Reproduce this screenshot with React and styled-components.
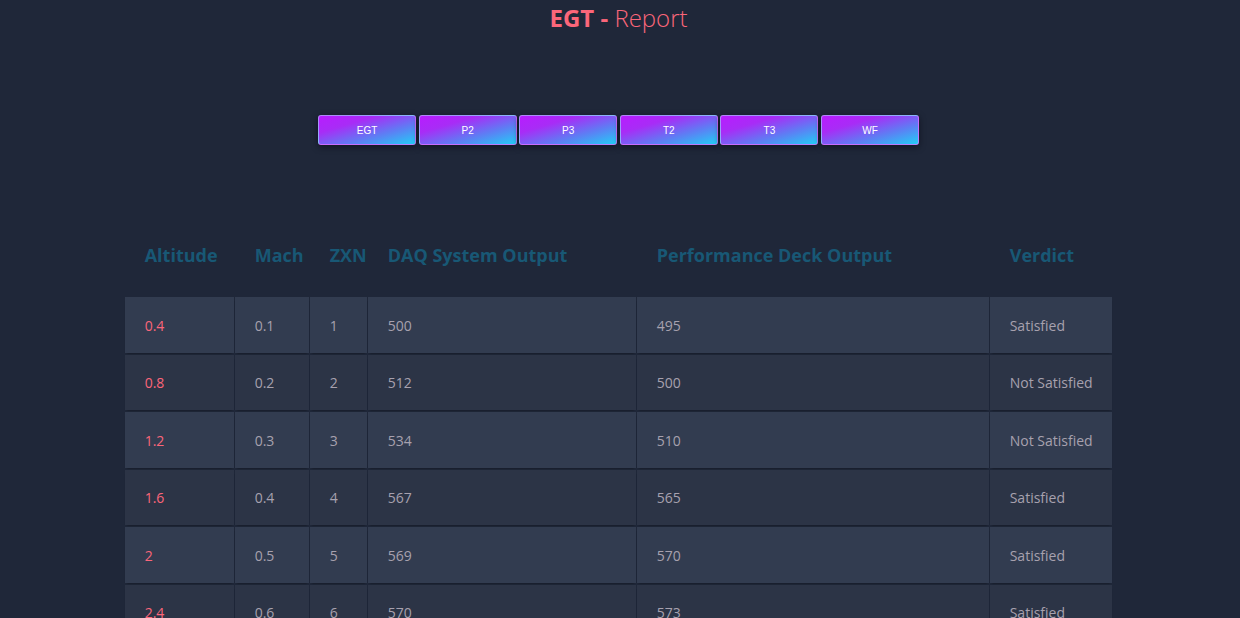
import React from "react";
import styled, { createGlobalStyle } from "styled-components";

const Global = createGlobalStyle`
  html, body { margin: 0; padding: 0; overflow: hidden; }
  body {
    background: #1F2739;
    font-family: "Open Sans", "Noto Sans", sans-serif;
    color: #A7A1AE;
  }
`;

const Page = styled.div`
  display: flex;
  flex-direction: column;
  align-items: center;
  padding: 6px 3px 0 0;
`;

const Title = styled.h1`
  margin: 0;
  font-size: 24px;
  line-height: 24px;
  font-weight: 300;
  color: #FB667A;
  text-align: center;
  strong { font-weight: 700; }
`;

const ButtonBar = styled.div`
  display: flex;
  gap: 2.6px;
  margin-top: 85px;
`;

const TabButton = styled.button`
  width: 98px;
  height: 30px;
  box-sizing: border-box;
  border: 1px solid rgba(220, 170, 255, 0.55);
  border-radius: 3px;
  background: linear-gradient(to bottom right, #b81cff 0%, #a82cf6 30%, #5f7cf4 65%, #22cdf6 100%);
  color: #fff;
  font-family: "Liberation Sans", Arial, sans-serif;
  font-size: 10px;
  box-shadow: 0 2px 6px rgba(8, 10, 20, 0.6);
  cursor: pointer;
  padding: 0;
`;

const Table = styled.table`
  margin-top: 67px;
  border-collapse: separate;
  border-spacing: 1px 2px;
  table-layout: fixed;
  width: 989px;
  text-align: left;
`;

const Th = styled.th`
  padding: 32px 0 31px 19.7px;
  font-size: 18px;
  line-height: 18px;
  font-weight: 700;
  color: #185875;
  background: #1F2739;
  white-space: nowrap;
`;

const Row = styled.tr`
  background: ${(p) => (p.$odd ? "#323C50" : "#2C3446")};
`;

const Td = styled.td`
  padding: 18.5px 0 17.5px 19.7px;
  font-size: 14px;
  line-height: 19.5px;
  font-weight: 400;
  color: ${(p) => (p.$accent ? "#FB667A" : "#A7A1AE")};
  box-shadow: 0 2px 2px -2px #0E1119;
  white-space: nowrap;
`;

const tabs = ["EGT", "P2", "P3", "T2", "T3", "WF"];
const widths = [109, 74, 57, 268, 352, 122];
const headers = ["Altitude", "Mach", "ZXN", "DAQ System Output", "Performance Deck Output", "Verdict"];
const rows = [
  ["0.4", "0.1", "1", "500", "495", "Satisfied"],
  ["0.8", "0.2", "2", "512", "500", "Not Satisfied"],
  ["1.2", "0.3", "3", "534", "510", "Not Satisfied"],
  ["1.6", "0.4", "4", "567", "565", "Satisfied"],
  ["2", "0.5", "5", "569", "570", "Satisfied"],
  ["2.4", "0.6", "6", "570", "573", "Satisfied"],
];

export default function App() {
  return (
    <>
      <Global />
      <Page>
        <Title>
          <strong>EGT -</strong> Report
        </Title>
        <ButtonBar>
          {tabs.map((t) => (
            <TabButton key={t}>{t}</TabButton>
          ))}
        </ButtonBar>
        <Table>
          <colgroup>
            {widths.map((w, i) => (
              <col key={i} style={{ width: w }} />
            ))}
          </colgroup>
          <thead>
            <tr>
              {headers.map((h) => (
                <Th key={h}>{h}</Th>
              ))}
            </tr>
          </thead>
          <tbody>
            {rows.map((r, i) => (
              <Row key={i} $odd={i % 2 === 0}>
                {r.map((c, j) => (
                  <Td key={j} $accent={j === 0}>
                    {c}
                  </Td>
                ))}
              </Row>
            ))}
          </tbody>
        </Table>
      </Page>
    </>
  );
}
